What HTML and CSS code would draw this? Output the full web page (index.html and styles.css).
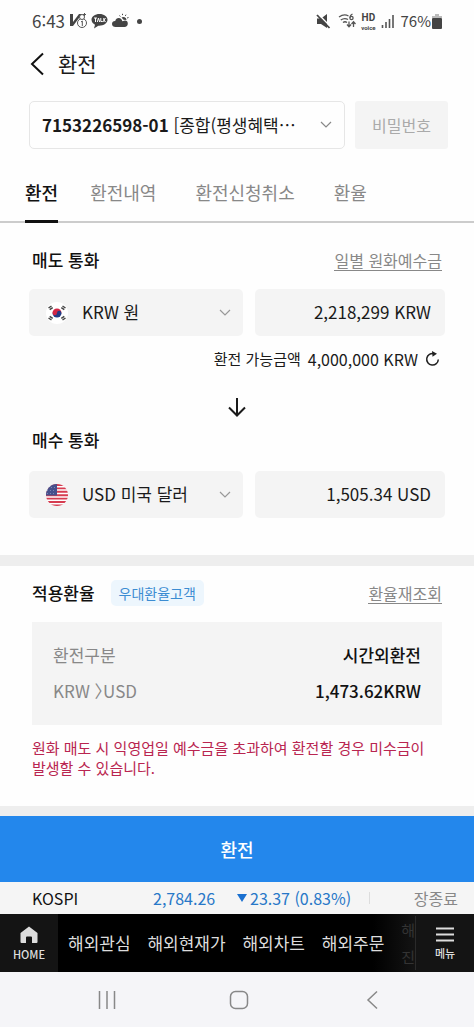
FILE: index.html
```html
<!DOCTYPE html>
<html lang="ko">
<head>
<meta charset="utf-8">
<meta name="viewport" content="width=device-width, initial-scale=1">
<title>환전</title>
<link rel="stylesheet" href="styles.css">
</head>
<body>
<div class="statusbar">
  <div class="status-group">
    <span class="status-time">6:43</span>
    <svg width="18" height="16" viewBox="0 0 18 16"><path d="M1 1h3v8l6-8h3L4 13H1z" fill="#444"/><circle cx="13" cy="10" r="4.5" fill="#fff" stroke="#555"/><circle cx="13" cy="4" r="2.5" fill="#fff" stroke="#555"/><path d="M12 9l1.300-1v5M14 1.500h3M15.500 0v3" fill="none" stroke="#555"/></svg>
    <svg width="17" height="16" viewBox="0 0 17 16"><path d="M8.500 1C4 1 .5 3.500.5 6.800c0 2.300 1.500 4 3.500 5L3 15.500 7.300 12.700C12.500 13 16.500 10.300 16.500 6.800 16.500 3.500 13 1 8.500 1z" fill="#444"/><path d="M3 5h3M4.500 5v4M6.300 9l1.200-4 1.200 4M9.800 5v3.500h2M12.800 5v4M14.500 5l-1.500 2 1.500 2" fill="none" stroke="#fff"/></svg>
    <svg width="17" height="16" viewBox="0 0 17 16"><path d="M3.500 14C1.500 14 0 12.700 0 10.900 0 9 1.400 7.900 3.200 8 3.700 6 5 5 6.700 5c2 0 3.300 1.300 3.600 3.200L13 7.500c1.800 0 2.800 1.300 2.800 3 0 2-1.300 3.500-3.300 3.500z" fill="#444"/><path d="M9.500 4.500A3.300 3.300 0 0 1 14.500 7l-3-.2z" fill="#444"/><path d="M7.500 2.500l.8 1M10.500.8v1.300M14 1.700l-.7 1.200M16.500 4.500l-1.400.5" stroke="#444"/></svg>
    <span class="status-dot"></span>
  </div>
  <div class="status-group status-right">
    <svg width="15" height="15" viewBox="0 0 15 15"><path d="M1 4.500h4L11 0v14L5 10H1z" fill="#444"/><path d="M2 0l13 13" stroke="#fff" stroke-width="1.500"/><path d="M1 1l12.500 13" stroke="#444" stroke-width="1.800"/></svg>
    <svg class="icon-wifi" width="18" height="16" viewBox="0 0 18 16"><g fill="none" stroke="#555" stroke-width="1.300"><path d="M1 4Q6 .5 10.500 3M2.800 7Q6.500 4.500 10 6.500M5 9.500Q7 8 9 9.500"/><path d="M14.500 1Q12 2 12 4.800"/><circle cx="13.500" cy="5" r="1.600"/><path d="M11 8.500v5M9 11.500l2 2.200 2-2.200M15.500 14V9M13.500 11l2-2.200 2 2.200"/></g></svg>
    <span class="hd"><span>HD</span><small>voice</small></span>
    <svg width="13" height="15" viewBox="0 0 13 15"><path d="M1.500 14v-3M5 14V8M8.500 14V5M12 14V1" stroke="#555" stroke-width="1.600"/></svg>
    <span class="status-battery">76%<svg width="10" height="15" viewBox="0 0 10 15"><path d="M3 0h4v2H10v2H0V2h3z" fill="#bbb"/><rect y="4" width="10" height="11" rx="1" fill="#444"/></svg></span>
  </div>
</div>

<header class="header">
  <button class="back" aria-label="뒤로"><svg width="14" height="24" viewBox="0 0 14 24"><path d="M13 1.500L2 12l11 10.500" fill="none" stroke="#111" stroke-width="2"/></svg></button>
  <h1>환전</h1>
</header>

<div class="account-row">
  <div class="account">
    <div class="account-label" aria-hidden="true"><b>7153226598-01</b> [종합(평생혜택<span class="dots">⋯</span></div>
    <svg width="12" height="8" viewBox="0 0 12 8"><path d="M1 1l5 5 5-5" fill="none" stroke="#888" stroke-width="1.200"/></svg>
    <select class="account-select" aria-label="계좌"><option>7153226598-01</option></select>
  </div>
  <input class="password" type="password" placeholder="비밀번호" aria-label="비밀번호">
</div>

<nav class="tabs">
  <a class="tab active" href="#exchange">환전</a>
  <a class="tab" href="#history">환전내역</a>
  <a class="tab" href="#cancel">환전신청취소</a>
  <a class="tab" href="#rates">환율</a>
</nav>

<main>
  <section class="section">
    <div class="section-head">
      <label class="title" for="sell">매도 통화</label>
      <a class="sub-link" href="#deposit">일별 원화예수금</a>
    </div>
    <div class="fields">
      <div class="currency">
        <svg class="flag" width="22" height="22" viewBox="0 0 22 22"><circle cx="11" cy="11" r="11" fill="#fff"/><path d="M6.500 11a4.500 4.500 0 0 1 9 0z" fill="#d32645"/><path d="M6.500 11a4.500 4.500 0 0 0 9 0z" fill="#243c86"/><circle cx="8.800" cy="11" r="2.200" fill="#d32645"/><circle cx="13.200" cy="11" r="2.200" fill="#243c86"/><path d="M2.500 6l3-2M3.700 7.600l3-2M16.500 4l3 2M15.300 5.600l3 2M2.500 16l3 2M3.700 14.400l3 2M16.500 18l3-2M15.300 16.400l3-2" stroke="#444" stroke-width="1.500"/></svg>
        <select id="sell"><option>KRW 원</option></select>
        <svg class="chevron" width="12" height="8" viewBox="0 0 12 8"><path d="M1 1l5 5 5-5" fill="none" stroke="#999" stroke-width="1.200"/></svg>
      </div>
      <input class="amount" type="text" value="2,218,299 KRW" aria-label="매도 금액">
    </div>
    <div class="available">
      <span>환전 가능금액</span><span class="available-amount">4,000,000 KRW</span>
      <button class="refresh" aria-label="새로고침"><svg width="15" height="16" viewBox="0 0 15 16"><path d="M9 2.700A5.800 5.800 0 1 0 13.300 8.500" fill="none" stroke="#222" stroke-width="1.500"/><path d="M7 0l5 2.800-4.500 3z" fill="#222"/></svg></button>
    </div>
    <svg class="arrow" width="20" height="22" viewBox="0 0 20 22"><path d="M10 2v17M2 11.500l8 8 8-8" fill="none" stroke="#1a1a1a" stroke-width="2"/></svg>
    <label class="title" for="buy">매수 통화</label>
    <div class="fields">
      <div class="currency">
        <svg class="flag" width="22" height="22" viewBox="0 0 22 22"><defs><clipPath id="round"><circle cx="11" cy="11" r="11"/></clipPath></defs><g clip-path="url(#round)"><path fill="#fff" d="M0 0h22v22H0z"/><path d="M0 1h22M0 4.400h22M0 7.800h22M0 11.200h22M0 14.600h22M0 18h22M0 21.400h22" stroke="#d63c50" stroke-width="1.900"/><path fill="#46508c" d="M0 0h11v11.500H0z"/><path d="M2 3.500h9M1 6.500h9M1 9.500h9" stroke="#7d84b2" stroke-dasharray="1 2"/></g></svg>
        <select id="buy"><option>USD 미국 달러</option></select>
        <svg class="chevron" width="12" height="8" viewBox="0 0 12 8"><path d="M1 1l5 5 5-5" fill="none" stroke="#999" stroke-width="1.200"/></svg>
      </div>
      <input class="amount" type="text" value="1,505.34 USD" aria-label="매수 금액">
    </div>
  </section>

  <section class="section rate">
    <div class="section-head">
      <h2 class="title">적용환율</h2>
      <span class="badge">우대환율고객</span>
      <a class="sub-link" href="#refresh-rate">환율재조회</a>
    </div>
    <dl class="rate-box">
      <div><dt>환전구분</dt><dd>시간외환전</dd></div>
      <div><dt class="pair">KRW 〉USD</dt><dd>1,473.62KRW</dd></div>
    </dl>
    <p class="warning">원화 매도 시 익영업일 예수금을 초과하여 환전할 경우 미수금이 발생할 수 있습니다.</p>
  </section>
</main>

<button class="submit">환전</button>

<div class="ticker">
  <span class="ticker-name">KOSPI</span>
  <span class="ticker-value">2,784.26</span>
  <span class="ticker-change"><i class="down"></i>23.37 (0.83%)</span>
  <span class="ticker-state">장종료</span>
</div>

<nav class="bottom-nav">
  <a class="home" href="#home"><svg width="18" height="17" viewBox="0 0 18 17"><path d="M9 .5L17.500 7v9a1 1 0 0 1-1 1H12v-5.500a1 1 0 0 0-1-1H7a1 1 0 0 0-1 1V17H1.500a1 1 0 0 1-1-1V7z" fill="#ddd"/></svg>HOME</a>
  <div class="shortcuts">
    <a href="#watch">해외관심</a>
    <a href="#price">해외현재가</a>
    <a href="#chart">해외차트</a>
    <a href="#order">해외주문</a>
    <a class="faded" href="#more">해<br>진</a>
  </div>
  <button class="menu"><svg width="18" height="15" viewBox="0 0 18 15"><path d="M0 1.500h18M0 7.500h18M0 13.500h18" stroke="#ddd" stroke-width="2"/></svg>메뉴</button>
</nav>

<div class="system-nav">
  <button aria-label="최근 앱"><svg width="18" height="20" viewBox="0 0 18 20"><path d="M1.500 1v18M9 1v18M16.500 1v18" stroke="#888" stroke-width="1.500"/></svg></button>
  <button aria-label="홈 화면"><svg width="20" height="20" viewBox="0 0 20 20"><rect x="1.500" y="1.500" width="17" height="17" rx="5" fill="none" stroke="#888" stroke-width="1.500"/></svg></button>
  <button aria-label="이전"><svg width="12" height="20" viewBox="0 0 12 20"><path d="M11 1.500L2 10l9 8.500" fill="none" stroke="#888" stroke-width="1.500"/></svg></button>
</div>
</body>
</html>
```
FILE: styles.css
```css
* { box-sizing: border-box; }
body {
  margin: 0;
  min-height: 100vh;
  display: flex;
  flex-direction: column;
  background: #fefefe;
  color: #1a1a1a;
  font: 17px/24px "Noto Sans CJK KR", sans-serif;
}
button, input, select { font: inherit; color: inherit; border: 0; margin: 0; padding: 0; background: none; min-width: 0; }
select { appearance: none; }
a { color: inherit; text-decoration: none; }
svg { display: block; flex: none; }
h1, h2, p, dl, dd { margin: 0; }

.statusbar { display: flex; justify-content: space-between; height: 42px; padding: 0 32px; color: #444; }
.status-group { display: flex; align-items: center; gap: 4px; }
.status-time { font-size: 17px; }
.status-dot { width: 5px; height: 5px; margin-left: 4px; border-radius: 50%; background: #444; }
.status-right { gap: 5px; }
.icon-wifi { margin-left: 2px; }
.hd { display: grid; font: bold 10px/12px Roboto, sans-serif; text-align: center; }
.hd small { font-size: 6px; line-height: 7px; }
.status-battery { display: flex; align-items: center; gap: 1px; margin-left: 2px; font-size: 15px; }

.header { display: flex; align-items: center; gap: 14px; height: 44px; padding: 0 30px; }
.header h1 { font-size: 21px; font-weight: 400; line-height: 30px; padding-bottom: 2px; }

.account-row { display: grid; grid-template-columns: 316fr 93fr; gap: 10px; padding: 15px 26px 0 29px; }
.account { position: relative; display: flex; align-items: center; justify-content: space-between; min-width: 0; height: 48px; padding: 0 12px; border: 1px solid #e6e6e6; border-radius: 5px; }
.account-label { white-space: nowrap; }
.account-label b { font-weight: 700; }
.account-select { position: absolute; inset: 0; width: 100%; opacity: 0; }
.password { width: 100%; height: 48px; background: #f4f4f4; border-radius: 3px; text-align: center; font-size: 16px; }
.password::placeholder { color: #aaa; opacity: 1; }

.tabs { display: flex; gap: 39px; margin-top: 25px; padding: 0 25px; height: 49px; border-bottom: 2px solid #ccc; color: #888; }
.tab { height: 49px; font-size: 18px; line-height: 36px; }
.tab.active { margin-right: -7px; color: #111; font-weight: 500; border-bottom: 3px solid #111; }

.section { padding: 22px 29px 37px; border-bottom: 11px solid #eee; }
.section-head { display: flex; align-items: center; margin: 0 3px; height: 30px; }
.title { font-size: 17px; font-weight: 500; color: #111; }
.section > .title { display: block; margin: 10px 3px 19px; line-height: 24px; }
.sub-link { margin-left: auto; font-size: 16px; line-height: 20px; color: #888; border-bottom: 1px solid #888; }
.fields { display: grid; grid-template-columns: 214fr 190fr; gap: 12px; margin-top: 14px; }
.title + .fields { margin-top: 0; }
.fields > * { height: 47px; background: #f4f4f4; border-radius: 5px; }
.currency { display: flex; align-items: center; padding: 0 12px 0 17px; }
.currency select { flex: 1; height: 47px; padding: 0 0 2px 14px; }
.amount { width: 100%; padding: 0 14px 2px; text-align: right; }
.available { display: flex; align-items: center; justify-content: flex-end; gap: 7px; margin: 11px 5px 0 0; font-size: 15px; }
.available-amount { font-size: 16px; }
.arrow { margin: 25px auto 0; }

.rate { padding: 12px 29px 28px; border-bottom-width: 10px; }
.badge { margin-left: 16px; padding: 0 8px; font-size: 14px; line-height: 26px; color: #3c8cd2; background: #edf6fd; border-radius: 5px; }
.rate-box { margin: 14px 3px 0; padding: 15px 21px 16px; background: #f4f4f4; }
.rate-box > div { display: flex; justify-content: space-between; line-height: 36px; }
.rate-box dt { color: #888; }
.rate-box .pair { font-feature-settings: "halt"; }
.rate-box dd { color: #111; font-weight: 500; }
.warning { margin: 13px 3px 0; font-size: 15px; line-height: 20px; color: #b92550; word-break: keep-all; }

.submit { height: 66px; background: #2387ec; color: #fff; font-size: 18px; font-weight: 500; }

.ticker { display: flex; align-items: center; height: 32px; padding: 0 16px 0 32px; background: #f5f5f5; color: #111; font-size: 16px; }
.ticker-name { flex: 121; }
.ticker-value, .ticker-change { color: #2878c8; }
.ticker-value { flex: 84; }
.ticker-change { display: flex; align-items: center; gap: 3px; flex: 132; border-right: 1px solid #ddd; line-height: 12px; }
.down { border: 5px solid transparent; border-top: 8px solid #1a70d0; border-bottom: 0; }
.ticker-state { flex: 88; text-align: right; color: #888; }

.bottom-nav { display: flex; height: 58px; background: #000; color: #ddd; }
.home, .menu { display: flex; flex: none; flex-direction: column; align-items: center; justify-content: center; gap: 4px; width: 58px; background: #141414; font-size: 11px; font-weight: 500; line-height: 14px; }
.shortcuts { display: flex; flex: 1; align-items: center; justify-content: space-between; min-width: 0; padding-left: 10px; overflow: hidden; white-space: nowrap; background: linear-gradient(90deg, #000 88%, #141414); }
.faded { color: #333; font-size: 15px; line-height: 27px; border-right: 1px solid #2a2a2a; }

.system-nav { display: flex; flex: 1; align-items: center; justify-content: space-around; min-height: 55px; padding: 0 36px 0 41px; background: #f5f5f8; }
.system-nav button { display: grid; place-items: center; width: 48px; height: 40px; }
```
